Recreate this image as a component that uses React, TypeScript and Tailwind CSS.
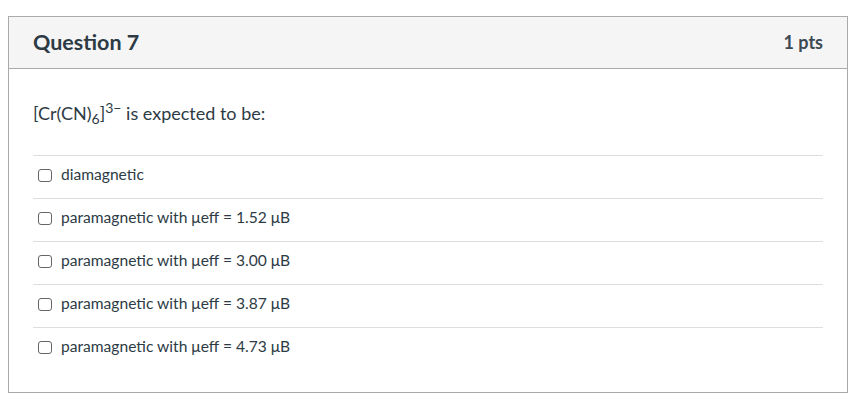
const answers = [
  "diamagnetic",
  "paramagnetic with μeff = 1.52 μB",
  "paramagnetic with μeff = 3.00 μB",
  "paramagnetic with μeff = 3.87 μB",
  "paramagnetic with μeff = 4.73 μB",
];

export default function App() {
  return (
    <div className="min-h-screen bg-white pl-2 pt-4 text-[#2d3b45]" style={{ fontFamily: "Lato, 'Liberation Sans', sans-serif" }}>
      <div className="w-[840px] border border-[#aaaaaa]">
        {/* header */}
        <div className="flex h-[52px] items-center justify-between border-b border-[#aaaaaa] bg-[#f5f5f5] px-6">
          <h2 className="text-[21.5px] font-bold leading-none">Question 7</h2>
          <span className="text-[18px] font-bold text-[#3d4a53]">1 pts</span>
        </div>

        {/* body */}
        <div className="px-6 pb-[22px] pt-[32px]">
          <p className="text-[18px] leading-6">
            [Cr(CN)<sub className="text-[14px]">6</sub>]<sup className="text-[14px]">3−</sup> is expected to be:
          </p>
          <div className="mt-[30px]">
            {answers.map((a) => (
              <div key={a} className="flex h-[43px] items-center gap-[9px] border-t border-[#dddddd] pb-[4px] pl-[5px]">
                <span className="h-[13px] w-[14px] rounded-[3px] border-[1.5px] border-[#666666] bg-white" />
                <span className="text-[15.6px]">{a}</span>
              </div>
            ))}
          </div>
        </div>
      </div>
    </div>
  );
}
